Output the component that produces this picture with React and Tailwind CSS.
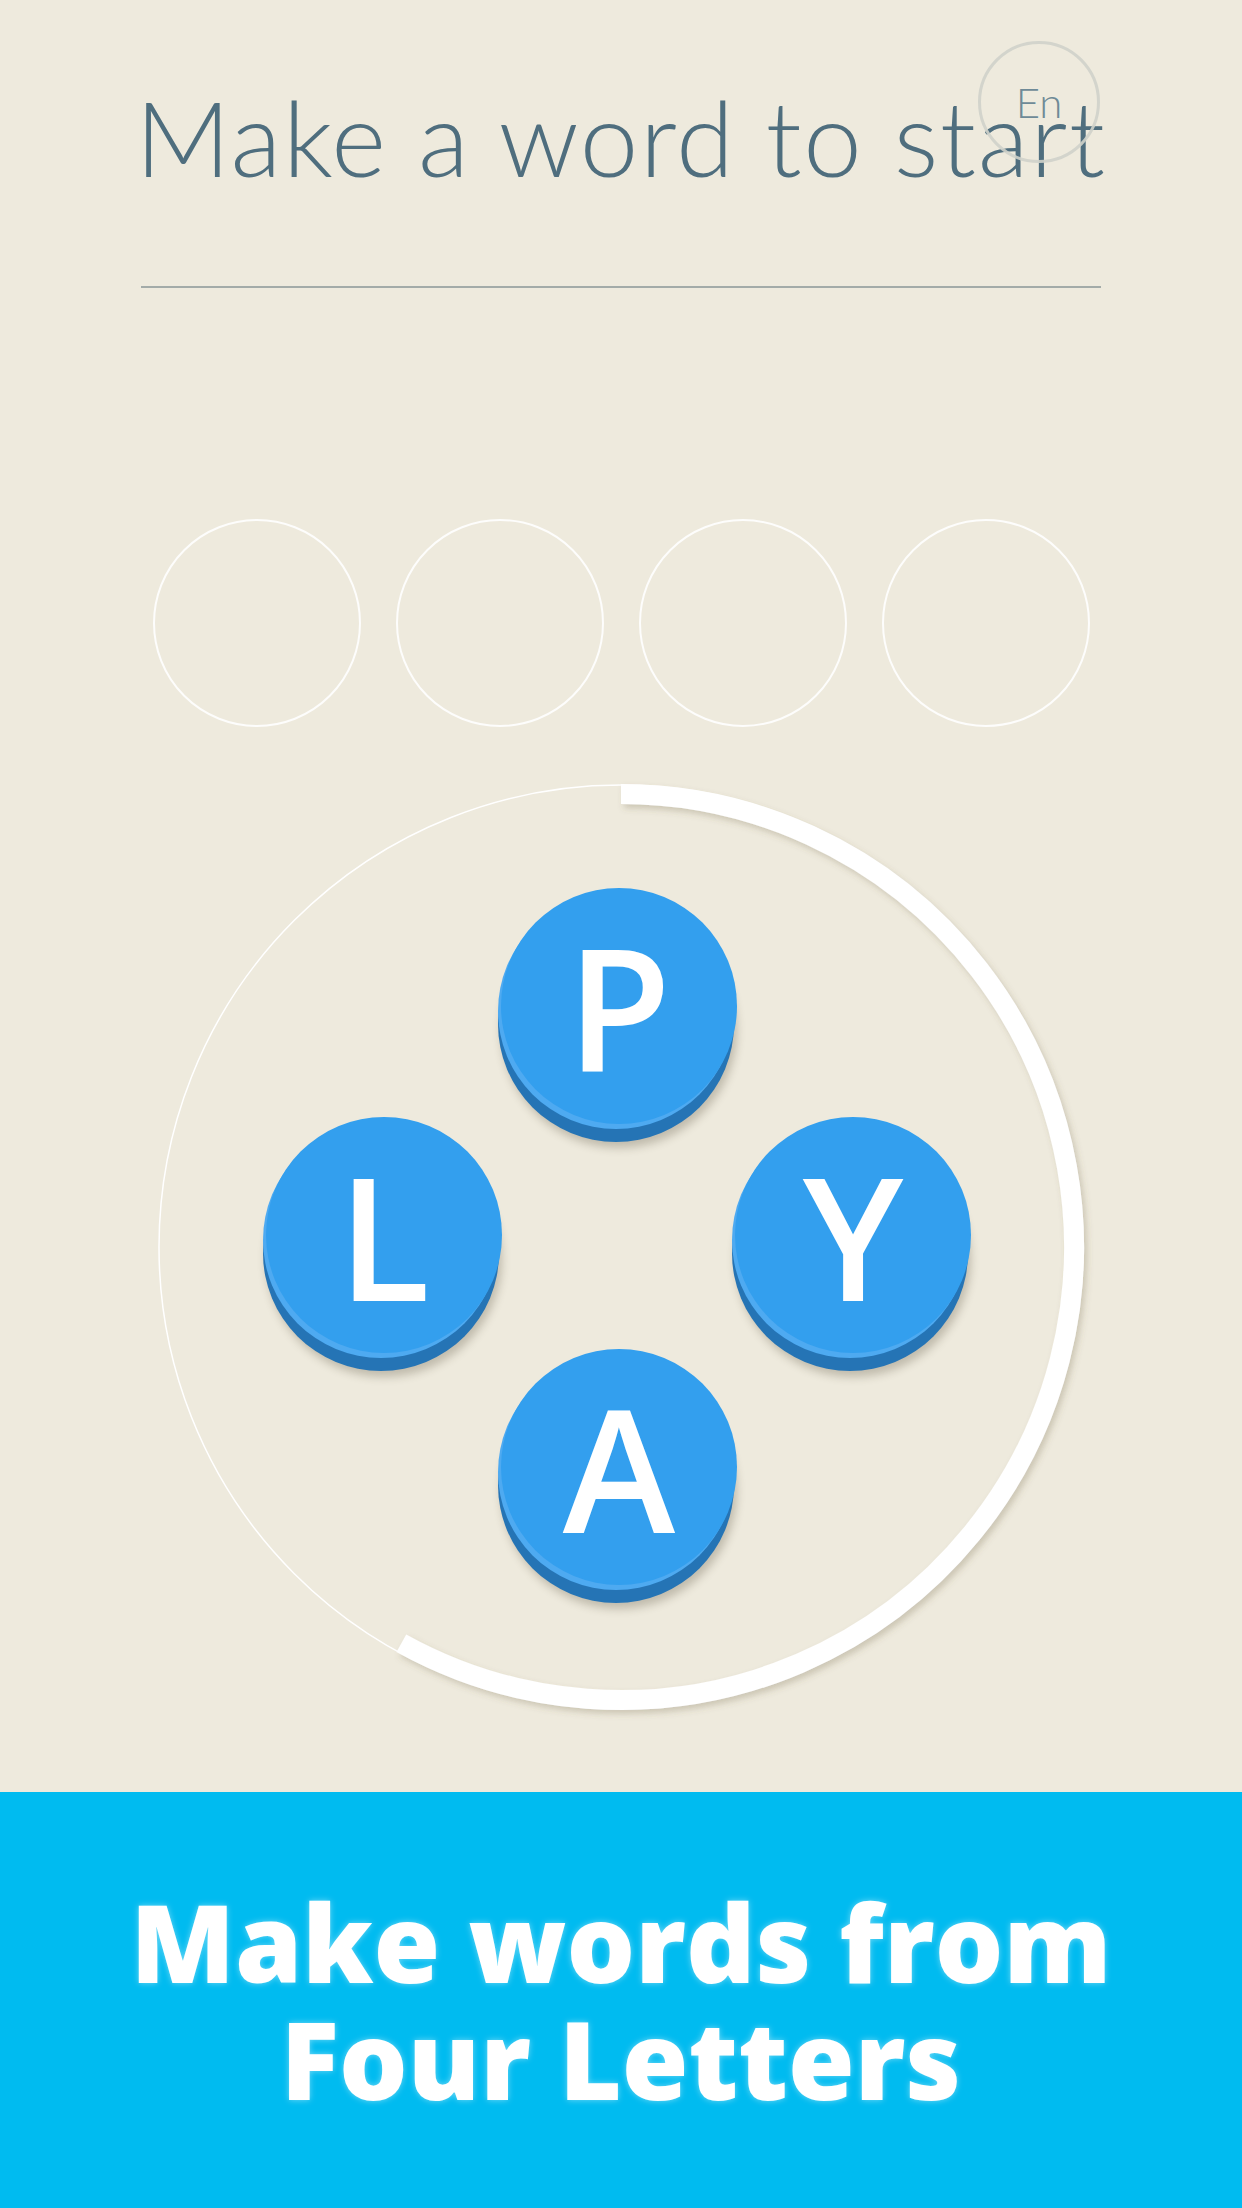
import React from 'react';

const LETTERS = [
    { ch: 'P', x: 343, y: 104 },
    { ch: 'L', x: 108, y: 333 },
    { ch: 'Y', x: 577, y: 333 },
    { ch: 'A', x: 343, y: 565 },
];

const Tile = ({ ch, x, y }) => (
    <div className="absolute w-[239px] h-[254px]" style={{ left: x - 3, top: y }}>
        <div className="absolute left-0 top-[18px] w-[236px] h-[236px] rounded-full bg-[#2574b5] shadow-[3px_6px_8px_rgba(60,50,30,0.25)]" />
        <div className="absolute left-0 top-[5px] w-[236px] h-[236px] rounded-full bg-[#4eaaf1]" />
        <div className="absolute left-[3px] top-0 w-[236px] h-[236px] rounded-full bg-[#339fee] flex items-center justify-center">
            <span className="text-white text-[170px] leading-none font-semibold font-['Open_Sans',sans-serif]">{ch}</span>
        </div>
    </div>
);

const Board = () => (
    <div className="relative w-[926px] h-[926px] mx-auto">
        <svg className="absolute inset-0 overflow-visible" width="926" height="926" viewBox="0 0 926 926">
            <defs>
                <filter id="arcShadow" x="-10%" y="-10%" width="120%" height="120%">
                    <feDropShadow dx="3" dy="4" stdDeviation="3" floodColor="#6b5a3a" floodOpacity="0.25" />
                </filter>
            </defs>
            <circle cx="463" cy="463" r="462" fill="none" stroke="#ffffff" strokeWidth="1.5" />
            <path
                d="M 463 10 A 453 453 0 1 1 243.4 859.2"
                fill="none"
                stroke="#ffffff"
                strokeWidth="20"
                filter="url(#arcShadow)"
            />
        </svg>
        {LETTERS.map((l) => (
            <Tile key={l.ch} {...l} />
        ))}
    </div>
);

export default function App() {
    return (
        <div className="relative w-[1242px] h-[2208px] bg-[#eeeadd] flex flex-col overflow-hidden">
            <div className="flex-1 flex flex-col">
                <h1 className="mt-[84px] text-center text-[105px] leading-none tracking-[1.7px] font-light text-[#4f6e7e] font-['Lato',sans-serif]">
                    Make a word to start
                </h1>

                <button className="absolute left-[978px] top-[41px] w-[122px] h-[122px] rounded-full border-[3px] border-[#cfd1ca]/90 flex items-center justify-center">
                    <span className="text-[42px] leading-none font-light text-[#6e8a97] font-['Lato',sans-serif]">En</span>
                </button>

                <div className="mt-[97px] mx-[141px] h-[2px] bg-[#a3aba8]" />

                <div className="mt-[231px] flex justify-center gap-[35px]">
                    {[0, 1, 2, 3].map((i) => (
                        <div key={i} className="w-[208px] h-[208px] rounded-full border-2 border-white/90" />
                    ))}
                </div>

                <div className="mt-[57px]">
                    <Board />
                </div>
            </div>

            <div className="h-[416px] bg-[#00bbf0] flex flex-col items-center justify-center">
                <p className="text-center text-white text-[108px] leading-[117px] font-extrabold font-['Open_Sans',sans-serif] [text-shadow:0_0_6px_rgba(255,255,255,0.45)]">
                    Make words from
                    <br />
                    Four Letters
                </p>
            </div>
        </div>
    );
}
